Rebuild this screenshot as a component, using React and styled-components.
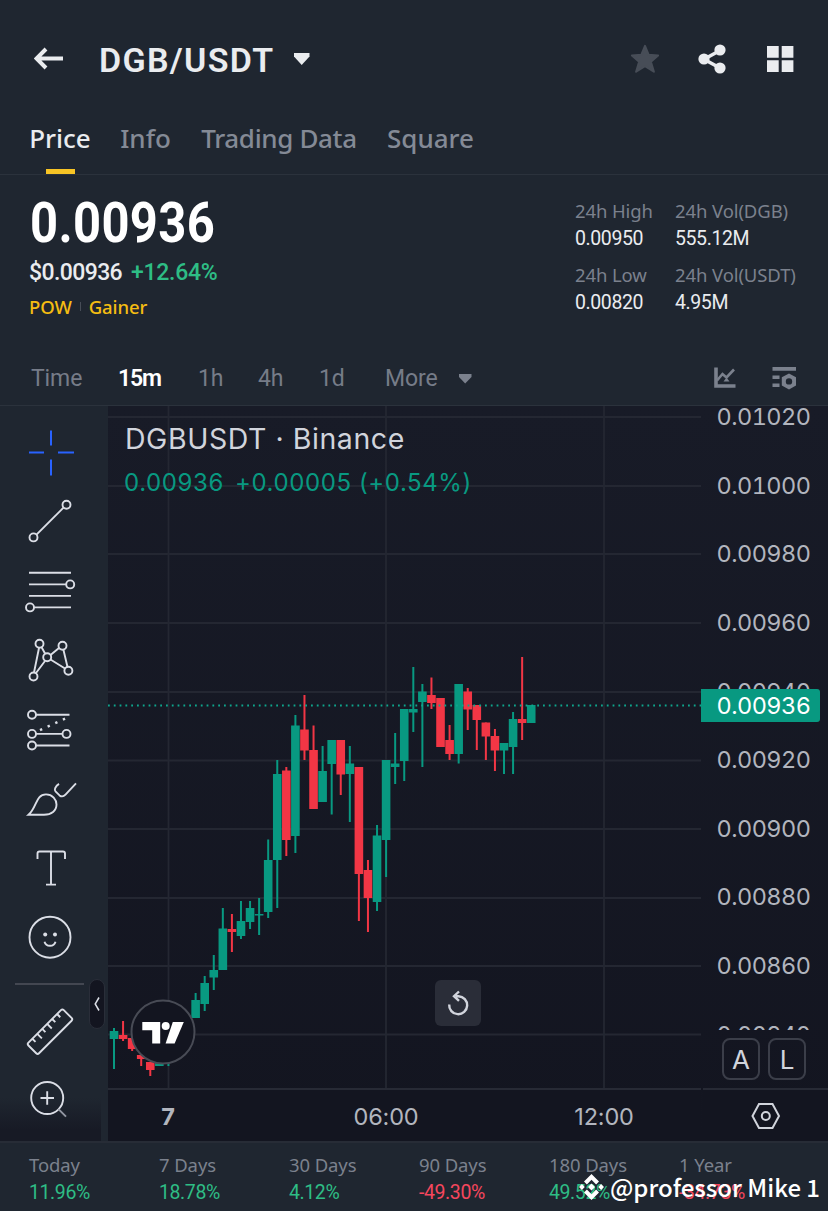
import React, { useState } from "react";
import styled, { createGlobalStyle } from "styled-components";

const GlobalStyle = createGlobalStyle`
  * {
    box-sizing: border-box;
  }

  body {
    margin: 0;
    background-color: #1f2630;
  }
`;

const UP = "#089981";
const DOWN = "#f23645";

const AppContainer = styled.div`
  width: 828px;
  height: 1211px;
  display: flex;
  flex-direction: column;
  position: relative;
  overflow: hidden;
  background-color: #1f2630;
  color: #eaecef;
  font-family: "Noto Sans", "Open Sans", sans-serif;
  white-space: nowrap;
`;

const Header = styled.header`
  height: 118px;
  display: flex;
  align-items: center;
  padding: 0 34px;
`;

const PairTitle = styled.h1`
  width: 175px;
  margin: 2px 20px 0 35px;
  font-family: Roboto, sans-serif;
  font-size: 34px;
  font-weight: 600;
  letter-spacing: 1.3px;
  line-height: 40px;
`;

const HeaderActions = styled.div`
  display: flex;
  align-items: center;
  gap: 37px;
  margin-left: auto;

  svg:last-child {
    margin-left: 3px;
    margin-right: -1px;
  }
`;

const Tabs = styled.nav`
  height: 57px;
  display: flex;
  gap: 30px;
  padding-left: 30px;
  border-bottom: 1px solid #2b323c;
`;

const Tab = styled.div`
  width: ${(props) => props.$width}px;
  height: 56px;
  display: flex;
  flex-direction: column;
  align-items: center;
  justify-content: space-between;
  font-size: 26px;
  font-weight: 500;
  line-height: 40px;
  letter-spacing: ${(props) => props.$spacing || 0}px;
  color: ${(props) => (props.$active ? "#eaecef" : "#848a96")};
  cursor: pointer;
`;

const TabMarker = styled.div`
  width: 29px;
  height: 5px;
  background-color: #f7c425;
`;

const Summary = styled.section`
  height: 175px;
  display: flex;
  justify-content: space-between;
  padding: 20px 29px 0 30px;
`;

const BigPrice = styled.div`
  height: 55px;
  font-family: Roboto, sans-serif;
  font-size: 55px;
  font-weight: 700;
  line-height: 57px;
  letter-spacing: 0.4px;
  color: #ffffff;
  transform: scaleX(0.89);
  transform-origin: left;
`;

const SubPrice = styled.div`
  display: flex;
  gap: 9px;
  margin: 7px 0 0 -1px;
  font-family: Roboto, sans-serif;
  font-size: 23px;
  font-weight: 500;
  line-height: 31px;
  letter-spacing: -0.6px;
`;

const Change = styled.span`
  letter-spacing: -0.3px;
  color: #2ebd85;
`;

const TagRow = styled.div`
  display: flex;
  align-items: center;
  gap: 8px;
  margin: 6px 0 0 -1px;
  font-size: 18.5px;
  font-weight: 500;
  line-height: 25px;
  letter-spacing: -0.1px;
  color: #f5bd12;
`;

const TagDivider = styled.span`
  width: 1px;
  height: 9px;
  background-color: #474d57;
`;

const DayStats = styled.div`
  display: grid;
  grid-template-columns: 100px 124px;
  align-content: start;
  row-gap: 8px;
  padding-top: 2px;
`;

const StatLabel = styled.div`
  font-size: 18.5px;
  line-height: 27px;
  letter-spacing: -0.1px;
  color: #7b818d;
`;

const StatValue = styled.div`
  font-family: Roboto, sans-serif;
  font-size: 19.5px;
  line-height: 29px;
  letter-spacing: -0.4px;
  color: ${(props) => props.$color || "#eaecef"};
`;

const IntervalBar = styled.div`
  height: 56px;
  display: flex;
  align-items: center;
  padding: 2px 31px 0;
  border-bottom: 1px solid #2b323c;
`;

const Interval = styled.div`
  width: ${(props) => props.$width}px;
  font-family: Roboto, sans-serif;
  font-size: 23px;
  font-weight: ${(props) => (props.$active ? 600 : 400)};
  letter-spacing: ${(props) => (props.$active ? -1.1 : -0.1)}px;
  color: ${(props) => (props.$active ? "#ffffff" : "#767c88")};
  cursor: pointer;
`;

const IntervalTools = styled.div`
  display: flex;
  align-items: center;
  gap: 36px;
  margin: -2px 0 0 auto;
`;

const ChartArea = styled.section`
  height: 737px;
  display: flex;
  border-bottom: 2px solid #272c36;
  background: linear-gradient(#181b27, #131520);
  font-family: Inter, sans-serif;
`;

const Toolbar = styled.aside`
  width: 108px;
  display: flex;
  flex-direction: column;
  position: relative;
  padding-top: 12px;
  border-right: 7px solid #1f2630;
  background: linear-gradient(#1f2630 692px, #171a25 724px);
`;

const ToolIcon = styled.svg`
  width: 101px;
  height: 69.3px;
  flex: none;
  fill: none;
  stroke: #dbdee6;
  stroke-width: 1.9;
`;

const ToolDivider = styled.div`
  width: 69px;
  height: 2px;
  flex: none;
  margin: 11px 0 11.4px 15px;
  background-color: #434751;
`;

const CollapseHandle = styled.button`
  position: absolute;
  left: 89px;
  top: 573px;
  width: 16px;
  height: 50px;
  display: flex;
  align-items: center;
  justify-content: center;
  padding: 0;
  border: 1px solid #2a2e39;
  border-radius: 8px;
  background-color: #131520;
`;

const Plot = styled.div`
  width: 593px;
  display: flex;
  flex-direction: column;
  position: relative;
`;

const Legend = styled.div`
  position: absolute;
  left: 17px;
  top: 14px;
`;

const LegendTitle = styled.div`
  font-size: 28.5px;
  line-height: 38px;
  letter-spacing: 0.55px;
  color: #d1d4dc;
`;

const LegendValues = styled.div`
  display: flex;
  gap: 11px;
  margin: 10px 0 0 -1px;
  font-size: 24px;
  line-height: 30px;
  letter-spacing: 0.6px;
  color: #089981;
`;

const ResetButton = styled.button`
  position: absolute;
  left: 327px;
  top: 574px;
  width: 46px;
  height: 46px;
  padding: 0;
  border: 0;
  border-radius: 6px;
  background-color: #2a2d38;
`;

const TimeAxis = styled.div`
  height: 53px;
  display: flex;
  padding-top: 6px;
  border-top: 2px solid #272a35;
  background-color: #131520;
  overflow: hidden;
`;

const TimeLabel = styled.div`
  width: 218px;
  flex: none;
  text-align: center;
  font-size: 23.5px;
  line-height: 42px;
  letter-spacing: -0.2px;
  font-weight: ${(props) => (props.$bold ? 700 : 400)};
  color: #b2b5be;

  &:first-child {
    margin-left: -49px;
  }
`;

const PriceScale = styled.div`
  flex: 1;
  display: flex;
  flex-direction: column;
  position: relative;
`;

const PriceLabels = styled.div`
  height: 624px;
  overflow: hidden;
`;

const PriceLabel = styled.div`
  height: 68.6px;
  padding-left: 15.5px;
  font-size: 23.5px;
  font-variant-numeric: tabular-nums;
  line-height: 68.6px;
  letter-spacing: -0.55px;
  color: #b2b5be;

  &:first-child {
    margin-top: -22.8px;
  }
`;

const CurrentPrice = styled.div`
  position: absolute;
  left: 0;
  top: 283px;
  width: 119px;
  height: 33px;
  padding-left: 15.5px;
  border-radius: 0 3px 3px 0;
  background-color: #089981;
  color: #ffffff;
  font-size: 23.5px;
  font-variant-numeric: tabular-nums;
  line-height: 33px;
  letter-spacing: -0.55px;
`;

const ScaleButtons = styled.div`
  height: 58px;
  display: flex;
  gap: 8px;
  padding: 8px 0 0 21px;
`;

const ScaleButton = styled.button`
  width: 38px;
  height: 42px;
  padding: 0;
  border: 2px solid #3b3e49;
  border-radius: 8px;
  background: transparent;
  color: #d1d4dc;
  font-family: Inter, sans-serif;
  font-size: 26px;
`;

const ScaleCorner = styled.div`
  height: 53px;
  margin-left: 2px;
  display: flex;
  align-items: center;
  justify-content: center;
  border-top: 2px solid #272a35;
  background-color: #131520;
`;

const Performance = styled.footer`
  height: 68px;
  display: grid;
  grid-template-columns: repeat(6, 130px);
  padding: 8px 0 0 29px;
`;

const Watermark = styled.div`
  position: absolute;
  left: 579px;
  top: 1169px;
  display: flex;
  align-items: center;
  gap: 6px;
  font-family: "Noto Sans CJK SC", sans-serif;
  font-size: 24px;
  font-weight: 500;
  line-height: 35px;
  color: #ffffff;
`;

const tabs = [
  { name: "Price", width: 60 },
  { name: "Info", width: 51 },
  { name: "Trading Data", width: 156, spacing: -0.35 },
  { name: "Square", width: 87 },
];

const intervals = [
  { name: "Time", width: 87 },
  { name: "15m", width: 80 },
  { name: "1h", width: 60 },
  { name: "4h", width: 61 },
  { name: "1d", width: 66 },
  { name: "More", width: 74 },
];

const prices = [
  "0.01020", "0.01000", "0.00980", "0.00960", "0.00940",
  "0.00920", "0.00900", "0.00880", "0.00860", "0.00840",
];

const performance = [
  { label: "Today", value: "11.96%" },
  { label: "7 Days", value: "18.78%" },
  { label: "30 Days", value: "4.12%" },
  { label: "90 Days", value: "-49.30%", down: true },
  { label: "180 Days", value: "49.52%" },
  { label: "1 Year", value: "-34.73%", down: true },
];

// up, wick top, body top, body bottom, wick bottom
const candles = [
  [1, 1028, 1031, 1039, 1069],
  [0, 1021, 1035, 1039, 1041],
  [0, 1038, 1038, 1049, 1051],
  [0, 1055, 1055, 1059, 1066],
  [0, 1062, 1062, 1070, 1076],
  [1, 1060, 1062, 1066, 1066],
  [1, 1056, 1058, 1063, 1066],
  [1, 1040, 1044, 1058, 1060],
  [1, 1012, 1018, 1044, 1048],
  [1, 993, 1000, 1018, 1018],
  [1, 976, 983, 1004, 1011],
  [1, 955, 970, 977.5, 990],
  [1, 908, 928.5, 970, 970],
  [0, 914, 929, 932, 952],
  [1, 901, 921, 936, 939],
  [1, 901, 908, 922, 929],
  [1, 898, 914, 915.5, 935],
  [1, 839.5, 860, 912, 918],
  [1, 760, 774, 860, 908],
  [0, 767, 770.5, 840, 856],
  [1, 715, 725.5, 836, 853],
  [0, 695, 729.5, 750.5, 760],
  [0, 725.5, 750, 809, 809],
  [1, 746, 771, 802, 802],
  [1, 740, 740, 764, 814.5],
  [0, 740, 740, 774.5, 795],
  [1, 746, 763.5, 774, 822],
  [0, 767, 767, 874, 921],
  [0, 860, 870, 898, 932],
  [1, 825, 835.5, 902, 911],
  [1, 760, 760, 840, 877],
  [1, 733, 763.5, 767, 784],
  [1, 709, 709, 761, 781],
  [1, 667, 709, 712.5, 732],
  [1, 684, 691.5, 702, 767],
  [0, 677.5, 695, 703, 709],
  [0, 698, 698, 747, 747],
  [0, 725, 740, 754, 760],
  [1, 684, 684, 754, 763.5],
  [0, 688, 691.5, 709.5, 730],
  [0, 705, 705, 720, 750],
  [0, 722.5, 722.5, 736.5, 760],
  [0, 729, 736, 750.5, 771],
  [1, 743, 743, 750.5, 774],
  [1, 712, 719, 747, 774],
  [0, 657, 719, 723, 740],
  [1, 705, 705, 723, 723],
];

const gridRows = [417, 486, 554, 623, 692, 760.5, 829, 898, 966, 1034.5];
const gridCols = [168.5, 386, 604];

function CandleChart() {
  return (
    <svg width="593" height="682" viewBox="108 406 593 682">
      <g stroke="#242732" strokeWidth="1.8">
        {gridRows.map((y) => (
          <line key={y} x1="108" x2="701" y1={y} y2={y} />
        ))}
        {gridCols.map((x) => (
          <line key={x} x1={x} x2={x} y1="406" y2="1088" />
        ))}
      </g>
      {candles.map(([up, high, top, bottom, low], i) => {
        const x = 114 + i * 9.07;
        const color = up ? UP : DOWN;
        return (
          <g key={i} fill={color}>
            <rect x={x - 1} y={high} width="2" height={low - high} />
            <rect x={x - 4.3} y={top} width="8.6" height={bottom - top} />
          </g>
        );
      })}
      <line
        x1="108"
        x2="701"
        y1="705.5"
        y2="705.5"
        stroke="#0ea58c"
        strokeWidth="1.8"
        strokeDasharray="1.8 4"
      />
      <circle cx="163" cy="1032" r="31.5" fill="#131520" stroke="#484b55" strokeWidth="2" />
      <g fill="#ffffff">
        <path d="M142.3 1022h17.9v21.5h-8v-13.3h-9.9z" />
        <circle cx="165.7" cy="1026" r="4" />
        <path d="M172.8 1022h11l-9.2 21.5h-9z" />
      </g>
    </svg>
  );
}

function DrawingTools() {
  return (
    <Toolbar>
      <ToolIcon viewBox="0 418.5 101 69.3">
        <path d="M29 453h15M58 453h16M51 431v15M51 460v16" stroke="#2962ff" strokeWidth="2" />
      </ToolIcon>
      <ToolIcon viewBox="0 487.3 101 69.3">
        <circle cx="66.5" cy="505" r="4" />
        <circle cx="33.5" cy="537.7" r="4" />
        <path d="M36.5 535l27-27" />
      </ToolIcon>
      <ToolIcon viewBox="0 556.6 101 69.3">
        <path d="M29 572.3h42M29 584h37M29 595.5h42M34 607h37" />
        <circle cx="70.2" cy="584" r="4" />
        <circle cx="30" cy="607" r="4" />
      </ToolIcon>
      <ToolIcon viewBox="0 626 101 69.3">
        <circle cx="39.5" cy="643.7" r="4" />
        <circle cx="62.5" cy="645.7" r="4" />
        <circle cx="47.2" cy="657.3" r="4" />
        <circle cx="33.5" cy="676.5" r="4" />
        <circle cx="68.4" cy="670.8" r="4" />
        <path d="M39 648l-5 24.5M41.5 647l3.5 6.5M50.5 655l8.5-7M63.5 650l4 17M50.5 659.5l14.5 9M45 661l-9 12" />
      </ToolIcon>
      <ToolIcon viewBox="0 695.3 101 69.3">
        <circle cx="32" cy="715" r="4" />
        <circle cx="32" cy="734.2" r="4" />
        <circle cx="66.5" cy="734.2" r="4" />
        <circle cx="32" cy="745.8" r="4" />
        <path d="M36 715h33.5M36 734.2h26.5M36 745.8h33.5" />
        <path d="M40 730.5l26-12" strokeWidth="2.4" strokeDasharray="2.4 6" />
      </ToolIcon>
      <ToolIcon viewBox="0 764.6 101 69.3">
        <path d="M28.5 815.4C37 808 35.5 795 46 795c6.5 0 10.5 5 10.5 10.2 0 6-5 10.2-12.5 10.2z" />
        <path d="M59 784.5c-4 2.5-5 6-3.5 7.5l4 4c2 1.5 4.3 1 6-.8L76 784" />
      </ToolIcon>
      <ToolIcon viewBox="0 834 101 69.3">
        <path d="M37.5 859v-5.5q0-2 2-2H63q2 0 2 2V859M51 851.5v33M46 884.6h10" />
      </ToolIcon>
      <ToolIcon viewBox="0 903.3 101 69.3">
        <circle cx="50" cy="937.5" r="20.5" />
        <path d="M44.5 942c1.5 5.5 9.5 5.5 11 0" />
        <circle cx="45.2" cy="934.7" r="2" fill="#dbdee6" stroke="none" />
        <circle cx="55" cy="934.7" r="2" fill="#dbdee6" stroke="none" />
      </ToolIcon>
      <ToolDivider />
      <ToolIcon viewBox="0 997 101 69.3">
        <g transform="translate(50 1031.7) rotate(-45)">
          <rect x="-25" y="-7.5" width="50" height="15" rx="2" />
          <path d="M-17.5-7.5v4.5M-10.5-7.5v6.5M-3.5-7.5v4.5M3.5-7.5v6.5M10.5-7.5v4.5M17.5-7.5v4.5" />
        </g>
      </ToolIcon>
      <ToolIcon viewBox="0 1066.3 101 69.3">
        <circle cx="47.2" cy="1098.3" r="16" />
        <path d="M40.5 1098.3h13.5M47.2 1091.5v13.5" />
        <path d="M58.5 1109.5l7.5 7.5" stroke="#9297a2" />
      </ToolIcon>
      <CollapseHandle>
        <svg width="6" height="14" viewBox="0 0 6 14" fill="none" stroke="#dbdee6" strokeWidth="1.5">
          <path d="M5 .5L1.2 7 5 13.5" />
        </svg>
      </CollapseHandle>
    </Toolbar>
  );
}

function App() {
  const [activeTab, setActiveTab] = useState("Price");
  const [activeInterval, setActiveInterval] = useState("15m");

  return (
    <AppContainer>
      <GlobalStyle />
      <Header>
        <svg width="30" height="24" viewBox="0 0 30 24" fill="none" stroke="#eaecef" strokeWidth="4">
          <path d="M12 2L2.5 11.5 12 21M2.5 11.5H29" />
        </svg>
        <PairTitle>DGB/USDT</PairTitle>
        <svg width="16" height="12" viewBox="0 0 16 12" fill="#eaecef">
          <path d="M0 0h15.5v3.5L7.7 12 0 3.5z" />
        </svg>
        <HeaderActions>
          <svg width="30" height="30" viewBox="0 0 30 30" fill="#474d57" stroke="#474d57" strokeWidth="2" strokeLinejoin="round">
            <path d="M15 1.8l3.7 9 9.4.7-7.2 6.2 3 10L15 22.2l-8.9 5.5 3-10L1.9 11.5l9.4-.7z" />
          </svg>
          <svg width="30" height="30" viewBox="0 0 30 30" fill="#eaecef">
            <path d="M23 6.5L7 15.2 23 24" fill="none" stroke="#eaecef" strokeWidth="3.5" />
            <circle cx="23" cy="6" r="5.6" />
            <circle cx="7" cy="15" r="5.6" />
            <circle cx="23" cy="24" r="5.6" />
          </svg>
          <svg width="28" height="26" viewBox="0 0 28 26" fill="#eaecef">
            <path d="M0 0h11.7v11.7H0zM14.7 0h11.7v11.7H14.7zM0 14.3h11.7V26H0zM14.7 14.3h11.7V26H14.7z" />
          </svg>
        </HeaderActions>
      </Header>

      <Tabs>
        {tabs.map((tab) => (
          <Tab
            key={tab.name}
            $width={tab.width}
            $spacing={tab.spacing}
            $active={tab.name === activeTab}
            onClick={() => setActiveTab(tab.name)}
          >
            {tab.name}
            {tab.name === activeTab && <TabMarker />}
          </Tab>
        ))}
      </Tabs>

      <Summary>
        <div>
          <BigPrice>0.00936</BigPrice>
          <SubPrice>
            <span>$0.00936</span>
            <Change>+12.64%</Change>
          </SubPrice>
          <TagRow>
            <span>POW</span>
            <TagDivider />
            <span>Gainer</span>
          </TagRow>
        </div>
        <DayStats>
          <div>
            <StatLabel>24h High</StatLabel>
            <StatValue>0.00950</StatValue>
          </div>
          <div>
            <StatLabel>24h Vol(DGB)</StatLabel>
            <StatValue>555.12M</StatValue>
          </div>
          <div>
            <StatLabel>24h Low</StatLabel>
            <StatValue>0.00820</StatValue>
          </div>
          <div>
            <StatLabel>24h Vol(USDT)</StatLabel>
            <StatValue>4.95M</StatValue>
          </div>
        </DayStats>
      </Summary>

      <IntervalBar>
        {intervals.map((item) => (
          <Interval
            key={item.name}
            $width={item.width}
            $active={item.name === activeInterval}
            onClick={() => setActiveInterval(item.name)}
          >
            {item.name}
          </Interval>
        ))}
        <svg width="13" height="10" viewBox="0 0 13 10" fill="#7b818d">
          <path d="M0 0h12.5v3L6.2 9.5 0 3z" />
        </svg>
        <IntervalTools>
          <svg width="22" height="22" viewBox="0 0 22 22" fill="none" stroke="#7b818d">
            <path d="M2 .5V19h19.5" strokeWidth="3.6" />
            <path d="M3 13.5L8.5 7l4 3.5L20 2.5" strokeWidth="2.6" />
            <path d="M9.5 14.5h6l-3-4z" fill="#7b818d" stroke="none" />
          </svg>
          <svg width="25" height="24" viewBox="0 0 25 24" fill="#7b818d">
            <path d="M.5 1h23.5v3.8H.5zM.5 9.5h7v3.6h-7zM.5 17.5h7V21h-7z" />
            <path fillRule="evenodd" d="M17 7.5l7 3.8v8.2l-7 4-7.2-4v-8.2zM17 12.2a3.2 3.2 0 1 0 0 6.4 3.2 3.2 0 0 0 0-6.4z" />
          </svg>
        </IntervalTools>
      </IntervalBar>

      <ChartArea>
        <DrawingTools />
        <Plot>
          <CandleChart />
          <Legend>
            <LegendTitle>DGBUSDT · Binance</LegendTitle>
            <LegendValues>
              <span>0.00936</span>
              <span>+0.00005 (+0.54%)</span>
            </LegendValues>
          </Legend>
          <ResetButton>
            <svg width="46" height="46" viewBox="0 0 46 46" fill="none" stroke="#d1d4dc" strokeWidth="2.4">
              <path d="M21 16.2h2.5a9 9 0 1 1-9.3 8.3M24 11.5l-5 4.7 5 4.7" />
            </svg>
          </ResetButton>
          <TimeAxis>
            <TimeLabel $bold>7</TimeLabel>
            <TimeLabel>06:00</TimeLabel>
            <TimeLabel>12:00</TimeLabel>
          </TimeAxis>
        </Plot>
        <PriceScale>
          <PriceLabels>
            {prices.map((price) => (
              <PriceLabel key={price}>{price}</PriceLabel>
            ))}
          </PriceLabels>
          <CurrentPrice>0.00936</CurrentPrice>
          <ScaleButtons>
            <ScaleButton>A</ScaleButton>
            <ScaleButton>L</ScaleButton>
          </ScaleButtons>
          <ScaleCorner>
            <svg width="30" height="26" viewBox="0 0 30 26" fill="none" stroke="#d1d4dc" strokeWidth="2">
              <path d="M8 1h13.5l6.5 12-6.5 12H8L1.5 13z" />
              <circle cx="14.8" cy="13" r="4" />
            </svg>
          </ScaleCorner>
        </PriceScale>
      </ChartArea>

      <Performance>
        {performance.map((item) => (
          <div key={item.label}>
            <StatLabel>{item.label}</StatLabel>
            <StatValue $color={item.down ? "#f6465d" : "#2ebd85"}>{item.value}</StatValue>
          </div>
        ))}
      </Performance>

      <Watermark>
        <svg width="25" height="26" viewBox="0 0 25 26" fill="#ffffff">
          <path d="M12.5 0l7.5 7.5-2.9 2.9-4.6-4.6-4.6 4.6L5 7.5zM12.5 26L5 18.5l2.9-2.9 4.6 4.6 4.6-4.6 2.9 2.9zM2.9 10.1L5.8 13l-2.9 2.9L0 13zM22.1 10.1L25 13l-2.9 2.9-2.9-2.9zM12.5 9.5L16 13l-3.5 3.5L9 13z" />
        </svg>
        <span>@professor Mike 1</span>
      </Watermark>
    </AppContainer>
  );
}

export default App;
